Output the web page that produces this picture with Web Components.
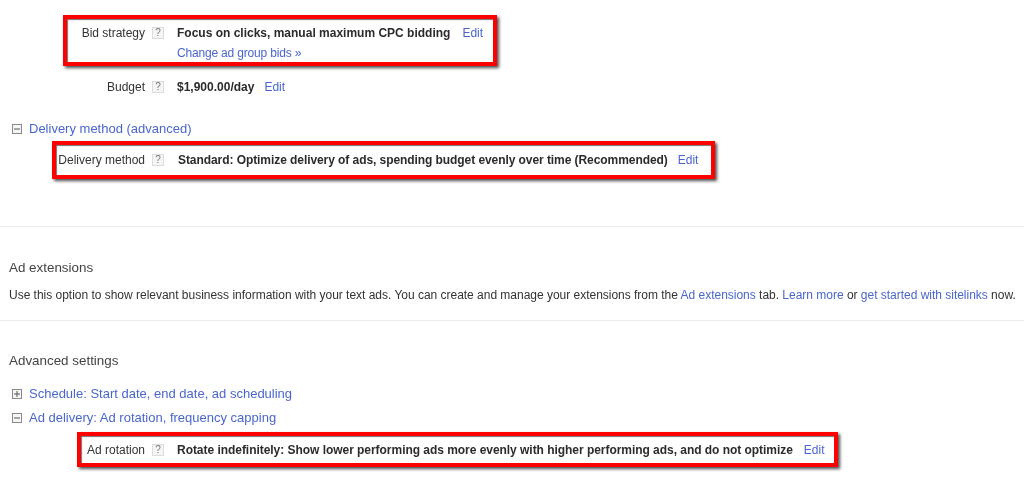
<!DOCTYPE html>
<html><head><meta charset="utf-8"><title>Settings</title>
<style>
html,body{margin:0;background:#fff}
body{font:12px/16px "Liberation Sans",Arial,sans-serif;color:#333;width:1024px;height:479px;overflow:hidden}
settings-page{filter:blur(.35px)}
</style></head><body>
<settings-page></settings-page>
<script>
const LINK='#4a66cc';
class HelpIcon extends HTMLElement{constructor(){super();this.attachShadow({mode:'open'}).innerHTML=`<style>
:host{display:inline-flex;width:12px;height:12px;box-sizing:border-box;border:1px solid #dcdcdc;background:#f5f5f5;color:#777;font-size:10px;line-height:10px;align-items:center;justify-content:center;flex:none}
</style>?`}}
customElements.define('help-icon',HelpIcon);
class AdLink extends HTMLElement{constructor(){super();this.attachShadow({mode:'open'}).innerHTML=`<style>:host{display:inline;color:${LINK};cursor:pointer}</style><slot></slot>`}}
customElements.define('ad-link',AdLink);
class SettingRow extends HTMLElement{constructor(){super();this.attachShadow({mode:'open'}).innerHTML=`<style>
:host{display:flex;box-sizing:border-box;align-items:flex-start;width:var(--w,auto);margin-left:var(--ml,0);height:var(--h,auto);padding-top:var(--pt,0)}
:host([boxed]){border:4px solid #f00;box-shadow:2px 2px 3px rgba(0,0,0,.7),inset 1px 1px 1px rgba(0,0,0,.55)}
.label{width:var(--lw);text-align:right;flex:none;white-space:nowrap}
.help{flex:none;display:flex;align-items:center;height:16px;margin-left:7px;width:var(--hw,25px)}
.val{font-weight:700;color:#2b2b2b;white-space:nowrap;letter-spacing:var(--ls,0)}
.edit{margin-left:var(--eg,12px)}
.body{display:flex;flex-direction:column;gap:4px}
.line{display:flex}
</style><div class="label"><slot name="label"></slot></div><div class="help"><help-icon></help-icon></div>
<div class="body"><div class="line"><div class="val"><slot name="value"></slot></div><div class="edit"><ad-link>Edit</ad-link></div></div><slot name="extra"></slot></div>`}}
customElements.define('setting-row',SettingRow);
class TreeToggle extends HTMLElement{constructor(){super();const open=this.hasAttribute('open');this.attachShadow({mode:'open'}).innerHTML=`<style>
:host{display:flex;align-items:center;gap:7px;height:16px;margin-left:12px;margin-top:var(--mt,0);font-size:13px}
svg{flex:none;display:block}
</style><svg width="10" height="10" viewBox="0 0 10 10"><rect x=".5" y=".5" width="9" height="9" fill="#f6f6f6" stroke="#8a8a8a"/><path d="M2 5H8${open?'':'M5 2V8'}" stroke="#555" fill="none"/></svg><ad-link><slot></slot></ad-link>`}}
customElements.define('tree-toggle',TreeToggle);
class SectionRule extends HTMLElement{constructor(){super();this.attachShadow({mode:'open'}).innerHTML=`<style>:host{display:block;height:1px;background:#ebebeb;margin-top:var(--mt,0)}</style>`}}
customElements.define('section-rule',SectionRule);
class SectionHead extends HTMLElement{constructor(){super();this.attachShadow({mode:'open'}).innerHTML=`<style>:host{display:block;margin:var(--mt,0) 0 0 9px;font-size:13.4px;line-height:16px;color:#444}</style><slot></slot>`}}
customElements.define('section-head',SectionHead);
class SettingsPage extends HTMLElement{constructor(){super();this.attachShadow({mode:'open'}).innerHTML=`<style>
:host{display:block;padding-top:15px;font:12px/16px "Liberation Sans",Arial,sans-serif;color:#333}
p{margin:11px 0 0 9px;white-space:nowrap;font-size:12px;line-height:16px;letter-spacing:-.017px}
.change{letter-spacing:-.18px}
</style>
<setting-row boxed style="--ml:63px;--w:434px;--h:51px;--pt:6px;--lw:78px;--hw:25px;--eg:12px">
<span slot="label">Bid strategy</span><span slot="value">Focus on clicks, manual maximum CPC bidding</span><ad-link class="change" slot="extra">Change ad group bids »</ad-link></setting-row>
<setting-row style="--ml:67px;--lw:78px;--hw:25px;--eg:10px;margin-top:13px"><span slot="label">Budget</span><span slot="value">$1,900.00/day</span></setting-row>
<tree-toggle open style="--mt:26px">Delivery method (advanced)</tree-toggle>
<setting-row boxed style="--ml:52px;--w:663px;--h:38px;--pt:7px;--lw:89px;--hw:26px;--eg:10px;--ls:-.07px;margin-top:4px">
<span slot="label">Delivery method</span><span slot="value">Standard: Optimize delivery of ads, spending budget evenly over time (Recommended)</span></setting-row>
<section-rule style="--mt:47px"></section-rule>
<section-head style="--mt:33px">Ad extensions</section-head>
<p>Use this option to show relevant business information with your text ads. You can create and manage your extensions from the <ad-link>Ad extensions</ad-link> tab. <ad-link>Learn more</ad-link> or <ad-link>get started with sitelinks</ad-link> now.</p>
<section-rule style="--mt:17px"></section-rule>
<section-head style="--mt:32px">Advanced settings</section-head>
<tree-toggle style="--mt:17px">Schedule: Start date, end date, ad scheduling</tree-toggle>
<tree-toggle open style="--mt:8px">Ad delivery: Ad rotation, frequency capping</tree-toggle>
<setting-row boxed style="--ml:77px;--w:761px;--h:35px;--pt:6px;--lw:64px;--hw:25px;--eg:11px;--ls:-.04px;margin-top:6px">
<span slot="label">Ad rotation</span><span slot="value">Rotate indefinitely: Show lower performing ads more evenly with higher performing ads, and do not optimize</span></setting-row>`}}
customElements.define('settings-page',SettingsPage);
</script></body></html>
